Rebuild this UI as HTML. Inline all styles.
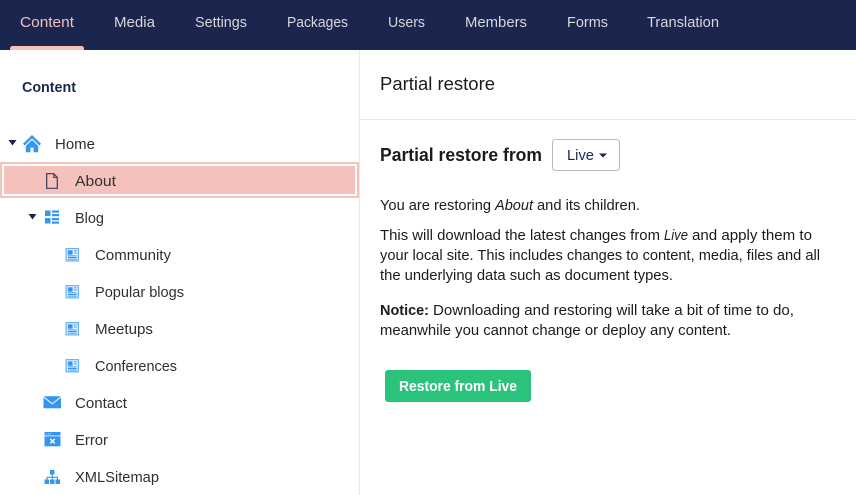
<!DOCTYPE html>
<html>
<head>
<meta charset="utf-8">
<style>
html,body{margin:0;padding:0;background:#fff;width:856px;height:495px;overflow:hidden}
svg{display:block}
text{font-family:"Liberation Sans",sans-serif;font-size:15px}
.n{fill:#d8d7d9}
.t{fill:#303033}
.b{fill:#1b1b1d}
.s{fill:#1b264f}
</style>
</head>
<body>
<svg width="856" height="495" viewBox="0 0 856 495" xmlns="http://www.w3.org/2000/svg">
<rect width="856" height="495" fill="#fff"/>
<!-- top nav -->
<rect width="856" height="50" fill="#1b264f"/>
<path d="M10 50v-1.500a2.500 2.500 0 0 1 2.500-2.500h69a2.500 2.500 0 0 1 2.500 2.500V50z" fill="#f5c1bc"/>
<text x="20" y="27" textLength="54" lengthAdjust="spacingAndGlyphs" fill="#f5c1bc">Content</text>
<text class="n" x="114" y="27" textLength="41" lengthAdjust="spacingAndGlyphs">Media</text>
<text class="n" x="195" y="27" textLength="52" lengthAdjust="spacingAndGlyphs">Settings</text>
<text class="n" x="287" y="27" textLength="61" lengthAdjust="spacingAndGlyphs">Packages</text>
<text class="n" x="388" y="27" textLength="37" lengthAdjust="spacingAndGlyphs">Users</text>
<text class="n" x="465" y="27" textLength="62" lengthAdjust="spacingAndGlyphs">Members</text>
<text class="n" x="567" y="27" textLength="41" lengthAdjust="spacingAndGlyphs">Forms</text>
<text class="n" x="647" y="27" textLength="72" lengthAdjust="spacingAndGlyphs">Translation</text>
<!-- sidebar -->
<rect x="359" y="50" width="1" height="445" fill="#e9e9eb"/>
<text class="s" x="22" y="92" textLength="54" lengthAdjust="spacingAndGlyphs" font-weight="700" style="font-size:14.500px">Content</text>
<!-- selected -->
<rect x="0" y="162" width="359" height="36" fill="#f5c1bc"/>
<rect x="2" y="164" width="355" height="32" fill="#fff"/>
<rect x="4" y="166" width="351" height="28" fill="#f5c1bc"/>
<!-- carets -->
<path d="M8.500 140h8l-4 5.500z" fill="#1b264f"/>
<path d="M28.500 214h8l-4 5.500z" fill="#1b264f"/>
<!-- home -->
<path d="M32 135l9 8.800-1.700 1.700L32 138.400 24.700 145.500 23 143.800z" fill="#3596f2"/>
<path d="M32 140l-6.200 6v6.200h4.700v-4.700h3v4.700h4.700V146z" fill="#3596f2"/>
<!-- doc -->
<path d="M46.700 173.700h7l3.600 3.700v10.900H46.700z" fill="none" stroke="#3f3a58" stroke-width="1.200"/>
<path d="M53.700 173.700v3.700h3.600" fill="none" stroke="#3f3a58" stroke-width="1"/>
<!-- blog icon -->
<g fill="#3596f2">
<rect x="45" y="210.500" width="5.500" height="5.500"/>
<rect x="45" y="218" width="5.500" height="5.500"/>
<rect x="52" y="210.500" width="7" height="2.200"/>
<rect x="52" y="214" width="7" height="2.200"/>
<rect x="52" y="218" width="7" height="2.200"/>
<rect x="52" y="221.500" width="7" height="2.200"/>
</g>
<!-- article icons -->
<defs>
<g id="a">
<rect x="0" y="0" width="13.500" height="13.500" fill="#6fb3f3"/>
<rect x="1.300" y="1.300" width="10.900" height="10.900" fill="#eef6fe"/>
<rect x="2.300" y="2.300" width="4.800" height="4.400" fill="#3596f2"/>
<path d="M8.200 2.900h3M8.200 5h3M2.300 7.900h8.900M2.300 9.500h8.900M2.300 11.100h8.900" stroke="#3596f2" stroke-width="1"/>
</g>
</defs>
<use href="#a" x="65.500" y="248"/>
<use href="#a" x="65.500" y="285"/>
<use href="#a" x="65.500" y="322"/>
<use href="#a" x="65.500" y="359"/>
<!-- mail -->
<path d="M43.500 396.300h17.500l-8.750 7z" fill="#3596f2"/>
<path d="M43.500 397.500v10.800h17.500v-10.800l-8.750 7z" fill="#3596f2"/>
<!-- error -->
<rect x="44.500" y="432" width="16" height="3.500" fill="#3596f2"/>
<path d="M46 433.700h1M48 433.700h1M50 433.700h1" stroke="#bcdcfa" stroke-width="1"/>
<rect x="44.500" y="436.300" width="16" height="10" fill="#3596f2"/>
<path d="M50.300 439l4.400 4.400M54.700 439l-4.400 4.400" stroke="#fff" stroke-width="1.500"/>
<!-- sitemap -->
<g fill="#3596f2">
<rect x="50" y="470" width="4.500" height="4.500"/>
<rect x="44.500" y="479.500" width="4.500" height="4.500"/>
<rect x="50" y="479.500" width="4.500" height="4.500"/>
<rect x="55.500" y="479.500" width="4.500" height="4.500"/>
<path d="M51.700 474h1.100v2.800h5.200v3h-1.100v-1.900h-4.100v1.900h-1.100v-1.900h-4.100v1.900h-1.100v-3h5.200z"/>
</g>
<!-- tree labels -->
<text class="t" x="55" y="149" textLength="40" lengthAdjust="spacingAndGlyphs">Home</text>
<text class="t" x="75" y="186" textLength="41" lengthAdjust="spacingAndGlyphs">About</text>
<text class="t" x="75" y="223" textLength="29" lengthAdjust="spacingAndGlyphs">Blog</text>
<text class="t" x="95" y="260" textLength="76" lengthAdjust="spacingAndGlyphs">Community</text>
<text class="t" x="95" y="297" textLength="89" lengthAdjust="spacingAndGlyphs">Popular blogs</text>
<text class="t" x="95" y="334" textLength="58" lengthAdjust="spacingAndGlyphs">Meetups</text>
<text class="t" x="95" y="371" textLength="82" lengthAdjust="spacingAndGlyphs">Conferences</text>
<text class="t" x="75" y="408" textLength="52" lengthAdjust="spacingAndGlyphs">Contact</text>
<text class="t" x="75" y="445" textLength="33" lengthAdjust="spacingAndGlyphs">Error</text>
<text class="t" x="75" y="482" textLength="84" lengthAdjust="spacingAndGlyphs">XMLSitemap</text>
<!-- right panel -->
<text class="b" x="380" y="90" textLength="115" lengthAdjust="spacingAndGlyphs" style="font-size:18px">Partial restore</text>
<rect x="360" y="119" width="496" height="1" fill="#e9e9eb"/>
<text class="b" x="380" y="161" textLength="162" lengthAdjust="spacingAndGlyphs" font-weight="700" style="font-size:18px">Partial restore from</text>
<rect x="552.500" y="139.500" width="67" height="31" rx="3" fill="#fff" stroke="#bbbabf"/>
<text class="s" x="567" y="160" textLength="27" lengthAdjust="spacingAndGlyphs">Live</text>
<path d="M599 153.500h8l-4 4z" fill="#1b264f"/>
<text class="b" x="380" y="210" textLength="111" lengthAdjust="spacingAndGlyphs">You are restoring</text>
<text class="b" x="495" y="210" textLength="38" lengthAdjust="spacingAndGlyphs" font-style="italic">About</text>
<text class="b" x="537" y="210" textLength="103" lengthAdjust="spacingAndGlyphs">and its children.</text>
<text class="b" x="380" y="240" textLength="280" lengthAdjust="spacingAndGlyphs">This will download the latest changes from</text>
<text class="b" x="664" y="240" textLength="24" lengthAdjust="spacingAndGlyphs" font-style="italic">Live</text>
<text class="b" x="692" y="240" textLength="120" lengthAdjust="spacingAndGlyphs">and apply them to</text>
<text class="b" x="380" y="260" textLength="440" lengthAdjust="spacingAndGlyphs">your local site. This includes changes to content, media, files and all</text>
<text class="b" x="380" y="280" textLength="293" lengthAdjust="spacingAndGlyphs">the underlying data such as document types.</text>
<text class="b" x="380" y="315" textLength="49" lengthAdjust="spacingAndGlyphs" font-weight="700">Notice:</text>
<text class="b" x="433" y="315" textLength="361" lengthAdjust="spacingAndGlyphs">Downloading and restoring will take a bit of time to do,</text>
<text class="b" x="380" y="335" textLength="351" lengthAdjust="spacingAndGlyphs">meanwhile you cannot change or deploy any content.</text>
<rect x="385" y="370" width="146" height="32" rx="3" fill="#2bc37c"/>
<text x="399" y="391" textLength="118" lengthAdjust="spacingAndGlyphs" font-weight="700" fill="#fff">Restore from Live</text>
</svg>
</body>
</html>
